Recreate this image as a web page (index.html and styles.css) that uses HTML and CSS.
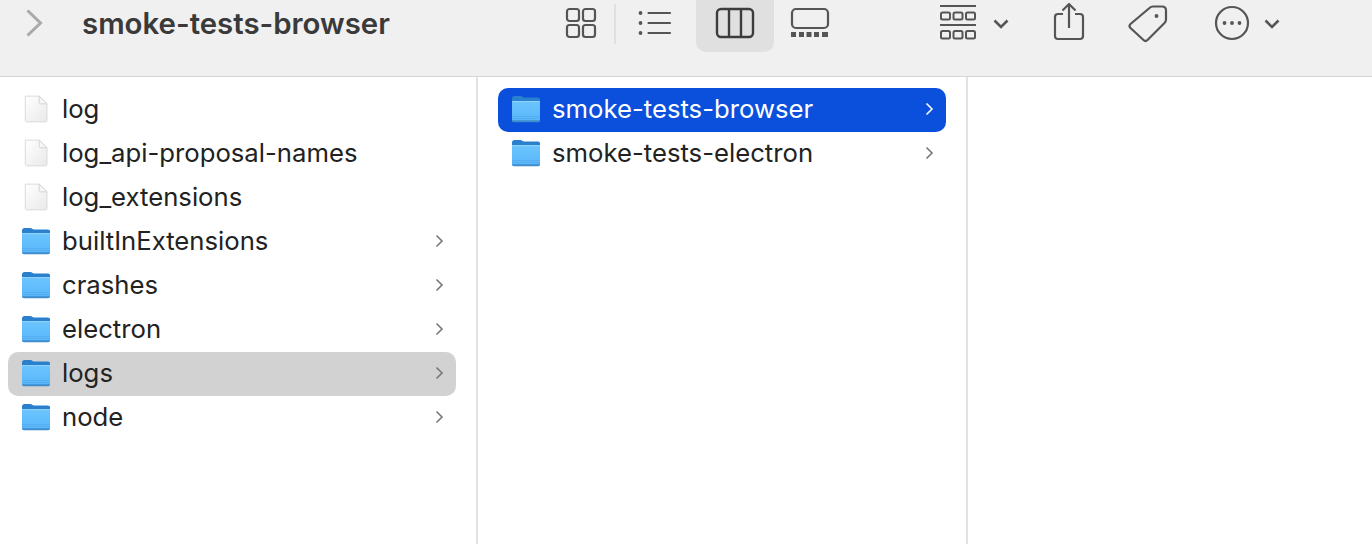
FILE: index.html
```html
<!DOCTYPE html>
<html lang="en">
<head>
<meta charset="utf-8">
<title>smoke-tests-browser</title>
<link rel="stylesheet" href="styles.css">
</head>
<body>
<svg class="defs" width="0" height="0" aria-hidden="true">
  <defs>
    <linearGradient id="fb" x1="0" y1="0" x2="0" y2="1">
      <stop offset="0" stop-color="#6cc5fe"/>
      <stop offset="1" stop-color="#58b5fa"/>
    </linearGradient>
    <linearGradient id="pg" x1="0" y1="0" x2="1" y2="1">
      <stop offset="0" stop-color="#ffffff"/>
      <stop offset="1" stop-color="#e9e9e9"/>
    </linearGradient>
    <symbol id="folder" viewBox="0 0 30 28">
      <path d="M1 3.500C1 2 2 1 3.500 1H9.500C11 1 11.500 2.600 13 2.600H27C28.300 2.600 29 3.400 29 4.600V8H1Z" fill="#2a80cc"/>
      <path d="M1 6.400H29V25C29 26.200 28.200 27 27 27H3C1.800 27 1 26.200 1 25Z" fill="url(#fb)"/>
      <rect x="1" y="6" width="28" height="1" fill="#8ed3fd"/>
      <rect x="1" y="21" width="28" height="1" fill="#55aef0"/>
      <rect x="1" y="23" width="28" height="1" fill="#55aef0"/>
      <path d="M1 25.200H29C29 26.400 28.200 27.200 27 27.200H3C1.800 27.200 1 26.400 1 25.200Z" fill="#3f8ccb"/>
    </symbol>
    <symbol id="file" viewBox="0 0 28 30">
      <path d="M2.500 1.200H17.500L25.800 9.500V27C25.800 28 25 28.800 24 28.800H4.300C3.300 28.800 2.500 28 2.500 27Z" fill="url(#pg)" stroke="#d8d8d8" stroke-width="1"/>
      <path d="M17.500 1.200V8C17.500 9 18.400 9.500 19.200 9.500H25.800Z" fill="#f6f6f6" stroke="#d2d2d2" stroke-width="1"/>
    </symbol>
    <symbol id="chev" viewBox="0 0 9 14">
      <path d="M1.500 1.500L7 7L1.500 12.500" fill="none" stroke="currentColor" stroke-width="1.600"/>
    </symbol>
  </defs>
</svg>

<header class="toolbar">
  <svg class="tool back" width="28" height="52" viewBox="0 0 28 52"><path d="M7.500 10.500L20.500 23L7.500 35.500" fill="none" stroke="#a9a9a9" stroke-width="3"/></svg>
  <h1 class="title">smoke-tests-browser</h1>

  <svg class="tool t-grid" width="32" height="52" viewBox="0 0 32 52" fill="none" stroke="#555" stroke-width="2.200">
    <rect x="2" y="9" width="12" height="12" rx="2.500"/><rect x="18" y="9" width="12" height="12" rx="2.500"/>
    <rect x="2" y="25" width="12" height="12" rx="2.500"/><rect x="18" y="25" width="12" height="12" rx="2.500"/>
  </svg>
  <span class="divider"></span>
  <svg class="tool t-list" width="36" height="52" viewBox="0 0 36 52" fill="none" stroke="#555" stroke-width="2.200" stroke-linecap="round">
    <circle cx="3.500" cy="13" r="1.900" fill="#555" stroke="none"/><circle cx="3.500" cy="23" r="1.900" fill="#555" stroke="none"/><circle cx="3.500" cy="33" r="1.900" fill="#555" stroke="none"/>
    <path d="M11.500 13H33M11.500 23H33M11.500 33H33"/>
  </svg>
  <span class="view-active">
    <svg class="tool" width="40" height="52" viewBox="0 0 40 52" fill="none" stroke="#3c3c3c" stroke-width="2.400">
      <rect x="2" y="9" width="36" height="28" rx="4"/><path d="M14 9V37M26 9V37"/>
    </svg>
  </span>
  <svg class="tool t-gallery" width="40" height="52" viewBox="0 0 40 52">
    <rect x="2" y="9" width="36" height="19" rx="4" fill="none" stroke="#555" stroke-width="2.200"/>
    <path d="M1 32h5v5H1zM9 32h5v5H9zM16.500 32h5v5h-5zM24 32h5v5h-5zM32 32h6v5h-6z" fill="#555"/>
  </svg>
  <svg class="tool t-group" width="38" height="52" viewBox="0 0 38 52" fill="none" stroke="#555" stroke-width="2">
    <path d="M0 6H36M0 25H36" stroke-width="2.200"/>
    <rect x="1" y="12.500" width="9" height="7" rx="1.500"/><rect x="13.500" y="12.500" width="9" height="7" rx="1.500"/><rect x="26" y="12.500" width="9" height="7" rx="1.500"/>
    <rect x="1" y="31" width="9" height="7.500" rx="1.500"/><rect x="13.500" y="31" width="9" height="7.500" rx="1.500"/><rect x="26" y="31" width="9" height="7.500" rx="1.500"/>
  </svg>
  <svg class="tool t-caret" width="18" height="52" viewBox="0 0 18 52"><path d="M2.500 20.500L9 27L15.500 20.500" fill="none" stroke="#555" stroke-width="2.600"/></svg>
  <svg class="tool t-share" width="32" height="52" viewBox="0 0 32 52" fill="none" stroke="#555" stroke-width="2.200" stroke-linejoin="round">
    <path d="M10 14H5C3 14 2 15 2 17V36C2 38 3 39 5 39H27C29 39 30 38 30 36V17C30 15 29 14 27 14H22"/>
    <path d="M16 28V5M9.500 10.500L16 4L22.500 10.500"/>
  </svg>
  <svg class="tool t-tag" width="40" height="52" viewBox="0 0 40 52" fill="none" stroke="#555" stroke-width="2.200" stroke-linejoin="round">
    <path d="M25 6.500H34C36.500 6.500 38 8 38 10.500V19.500C38 21 37.500 22 36.500 23L19.500 40C18.300 41.200 16.700 41.200 15.500 40L2.500 28C1.300 26.800 1.300 25.200 2.500 24L21.500 8C22.500 7 23.500 6.500 25 6.500Z"/>
    <circle cx="28.500" cy="16" r="1.900" fill="#555" stroke="none"/>
  </svg>
  <svg class="tool t-more" width="36" height="52" viewBox="0 0 36 52" fill="none" stroke="#555" stroke-width="2.200">
    <circle cx="18" cy="23" r="16"/>
    <circle cx="10.500" cy="23" r="1.900" fill="#555" stroke="none"/><circle cx="18" cy="23" r="1.900" fill="#555" stroke="none"/><circle cx="25.500" cy="23" r="1.900" fill="#555" stroke="none"/>
  </svg>
  <svg class="tool t-caret2" width="18" height="52" viewBox="0 0 18 52"><path d="M2.500 20.500L9 27L15.500 20.500" fill="none" stroke="#555" stroke-width="2.600"/></svg>
</header>

<main class="browser">
  <section class="column first">
    <div class="row"><svg class="icon"><use href="#file"/></svg><span class="name">log</span></div>
    <div class="row"><svg class="icon"><use href="#file"/></svg><span class="name">log_api-proposal-names</span></div>
    <div class="row"><svg class="icon"><use href="#file"/></svg><span class="name">log_extensions</span></div>
    <div class="row"><svg class="icon"><use href="#folder"/></svg><span class="name">builtInExtensions</span><svg class="chevron"><use href="#chev"/></svg></div>
    <div class="row"><svg class="icon"><use href="#folder"/></svg><span class="name">crashes</span><svg class="chevron"><use href="#chev"/></svg></div>
    <div class="row"><svg class="icon"><use href="#folder"/></svg><span class="name">electron</span><svg class="chevron"><use href="#chev"/></svg></div>
    <div class="row inactive"><svg class="icon"><use href="#folder"/></svg><span class="name">logs</span><svg class="chevron"><use href="#chev"/></svg></div>
    <div class="row"><svg class="icon"><use href="#folder"/></svg><span class="name">node</span><svg class="chevron"><use href="#chev"/></svg></div>
  </section>
  <section class="column second">
    <div class="row selected"><svg class="icon"><use href="#folder"/></svg><span class="name">smoke-tests-browser</span><svg class="chevron"><use href="#chev"/></svg></div>
    <div class="row"><svg class="icon"><use href="#folder"/></svg><span class="name">smoke-tests-electron</span><svg class="chevron"><use href="#chev"/></svg></div>
  </section>
  <section class="column third"></section>
</main>
</body>
</html>
```
FILE: styles.css
```css
* { box-sizing: border-box; }
html, body { margin: 0; height: 544px; overflow: hidden; background: #fff; }
body { font-family: Inter, "Liberation Sans", sans-serif; color: #222; }
.defs { position: absolute; }

.toolbar {
  display: flex;
  align-items: flex-start;
  height: 77px;
  background: #f0f0f0;
  border-bottom: 1px solid #d6d6d6;
  padding-left: 20px;
}
.tool { display: block; flex: none; }
.title {
  margin: 0 0 0 34px;
  width: 483px;
  flex: none;
  font-size: 29.400px;
  line-height: 48px;
  font-weight: 600;
  color: #3a3a3a;
  white-space: nowrap;
}
.divider { width: 2px; height: 40px; margin: 4px 21px 0 17px; background: #e0e0e0; flex: none; }
.view-active {
  display: block;
  flex: none;
  width: 78px;
  height: 52px;
  margin-left: 23px;
  padding-left: 19px;
  background: #e0e0e0;
  border-radius: 0 0 10px 10px;
}
.t-gallery { margin-left: 16px; }
.t-group { margin-left: 110px; }
.t-caret { margin-left: 14px; }
.t-share { margin-left: 43px; }
.t-tag { margin-left: 43px; }
.t-more { margin-left: 46px; }
.t-caret2 { margin-left: 13px; }

.browser { display: flex; height: 467px; }
.column { flex: none; padding-top: 11px; border-right: 2px solid #e2e2e2; }
.first { width: 478px; padding-left: 8px; padding-right: 20px; }
.second { width: 490px; padding-left: 20px; padding-right: 20px; }
.third { flex: 1; border-right: 0; }

.row {
  display: flex;
  align-items: center;
  height: 44px;
  padding: 0 12px 0 13px;
  border-radius: 10px;
}
.icon { width: 30px; height: 28px; flex: none; margin-bottom: 2px; }
.name {
  flex: 1;
  margin-left: 11px;
  margin-bottom: 3px;
  font-size: 25.700px;
  white-space: nowrap;
  color: #222;
}
.chevron { width: 9px; height: 14px; flex: none; margin-bottom: 2px; color: #777; }
.inactive { background: #d2d2d2; }
.selected { background: #0a50dc; }
.selected .name { color: #fff; }
.selected .chevron { color: #fff; }
```
